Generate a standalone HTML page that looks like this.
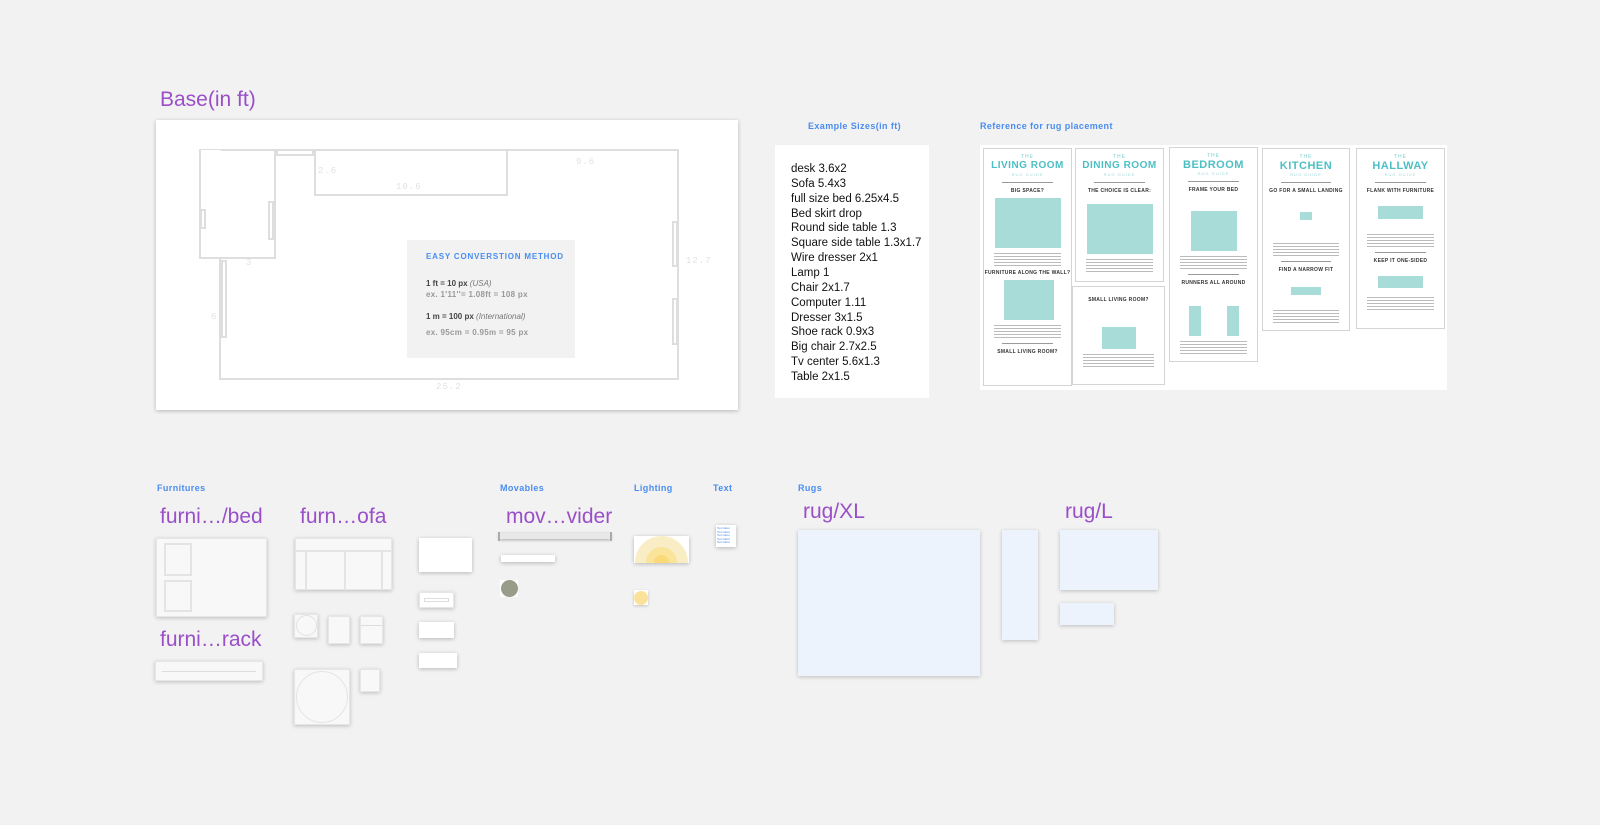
<!DOCTYPE html>
<html><head><meta charset="utf-8"><style>
*{margin:0;padding:0;box-sizing:border-box}
body{width:1600px;height:825px;background:#f2f2f2;position:relative;overflow:hidden;font-family:"Liberation Sans",sans-serif}
.a{position:absolute}
.lbl{position:absolute;color:#4a8df0;font-size:9px;font-weight:bold;letter-spacing:.4px;line-height:10px}
.pl{position:absolute;color:#9a4fc9;font-size:21px;line-height:24px;white-space:nowrap}
.w{position:absolute;border:2px solid #dedede}
.dim{position:absolute;color:#e2e2e2;font-size:9px;font-family:"Liberation Mono",monospace;letter-spacing:1px}
.sh{position:absolute;background:#fff;box-shadow:0 1px 4px rgba(0,0,0,.25)}
.fb{position:absolute;background:#f8f8f8;box-shadow:0 1px 4px rgba(0,0,0,.22);border:1px solid #e6e6e6}
.rug{position:absolute;background:#edf3fc;box-shadow:0 1px 4px rgba(0,0,0,.22)}
.card{position:absolute;background:#fff;border:1px solid #d4d4d4;text-align:center;overflow:hidden}
.t1{color:#7fd0d0;font-size:5px;letter-spacing:1px;margin-top:5px}
.t2{color:#4dbfc4;font-size:11px;font-weight:bold;letter-spacing:.5px;line-height:12px}
.t3{color:#9ed8d8;font-size:4px;letter-spacing:1px}
.hr{height:1px;background:#999;margin:5px 18px}
.h{font-size:5px;font-weight:bold;color:#333;letter-spacing:.3px;margin-top:3px}
.teal{background:#a7dcd9;margin:4px auto}
.tx{height:14px;margin:4px 10px;background:repeating-linear-gradient(#fff 0 1px,#bbb 1px 2px,#fff 2px 3px)}
</style></head><body>

<div class="pl" style="left:160px;top:88px">Base(in ft)</div>
<div class="sh" style="left:156px;top:120px;width:582px;height:290px"></div>
<!-- floor plan -->
<div class="w" style="left:199px;top:149px;width:77px;height:110px"></div>
<div class="w" style="left:219px;top:149px;width:460px;height:231px;border-left:none"></div>
<div class="a" style="left:219px;top:257px;width:2px;height:123px;background:#dedede"></div>
<div class="a" style="left:201px;top:150px;width:20px;height:107px;background:#fff"></div>
<div class="a" style="left:221px;top:150px;width:55px;height:107px;background:transparent"></div>
<div class="w" style="left:276px;top:149px;width:38px;height:7px"></div>
<div class="w" style="left:314px;top:149px;width:194px;height:47px"></div>
<div class="w" style="left:200px;top:209px;width:6px;height:20px"></div>
<div class="w" style="left:268px;top:201px;width:6px;height:39px"></div>
<div class="w" style="left:221px;top:260px;width:6px;height:78px"></div>
<div class="w" style="left:672px;top:221px;width:6px;height:46px"></div>
<div class="w" style="left:672px;top:298px;width:6px;height:47px"></div>
<div class="dim" style="left:318px;top:166px">2.6</div>
<div class="dim" style="left:396px;top:182px">10.6</div>
<div class="dim" style="left:576px;top:157px">9.6</div>
<div class="dim" style="left:246px;top:258px">3</div>
<div class="dim" style="left:211px;top:312px">6</div>
<div class="dim" style="left:686px;top:256px">12.7</div>
<div class="dim" style="left:436px;top:382px">25.2</div>
<div class="a" style="left:407px;top:240px;width:168px;height:118px;background:#f2f2f2"></div>
<div class="a" style="left:426px;top:252px;color:#4a8df0;font-size:8px;font-weight:bold;letter-spacing:.8px">EASY CONVERSTION METHOD</div>
<div class="a" style="left:426px;top:279px;color:#444;font-size:8px;font-weight:bold">1 ft = 10 px <i style="font-weight:normal;color:#777">(USA)</i></div>
<div class="a" style="left:426px;top:290px;color:#999;font-size:8px;font-weight:bold;letter-spacing:.3px">ex. 1'11''= 1.08ft = 108 px</div>
<div class="a" style="left:426px;top:312px;color:#444;font-size:8px;font-weight:bold">1 m = 100 px <i style="font-weight:normal;color:#777">(International)</i></div>
<div class="a" style="left:426px;top:328px;color:#999;font-size:8px;font-weight:bold;letter-spacing:.3px">ex. 95cm = 0.95m = 95 px</div>

<!-- example sizes -->
<div class="lbl" style="left:808px;top:121px">Example Sizes(in ft)</div>
<div class="a" style="left:775px;top:145px;width:154px;height:253px;background:#fff"></div>
<div class="a" style="left:791px;top:162px;font-size:11.5px;line-height:14.86px;color:#111">desk 3.6x2<br>Sofa 5.4x3<br>full size bed 6.25x4.5<br>Bed skirt drop<br>Round side table 1.3<br>Square side table 1.3x1.7<br>Wire dresser 2x1<br>Lamp 1<br>Chair 2x1.7<br>Computer 1.11<br>Dresser 3x1.5<br>Shoe rack 0.9x3<br>Big chair 2.7x2.5<br>Tv center 5.6x1.3<br>Table 2x1.5</div>

<!-- rug guide -->
<div class="lbl" style="left:980px;top:121px">Reference for rug placement</div>
<div class="a" style="left:980px;top:145px;width:467px;height:245px;background:#fff"></div>
<div class="card" style="left:983px;top:148px;width:89px;height:238px">
<div class="t1">THE</div><div class="t2" style="font-size:10px">LIVING ROOM</div><div class="t3">RUG GUIDE</div><div class="hr"></div>
<div class="h">BIG SPACE?</div><div class="teal" style="width:66px;height:50px"></div><div class="tx"></div>
<div class="h">FURNITURE ALONG THE WALL?</div><div class="teal" style="width:50px;height:40px;margin-left:20px"></div><div class="tx"></div><div class="hr"></div><div class="h">SMALL LIVING ROOM?</div></div>
<div class="card" style="left:1075px;top:148px;width:89px;height:134px">
<div class="t1">THE</div><div class="t2" style="font-size:10px">DINING ROOM</div><div class="t3">RUG GUIDE</div><div class="hr"></div>
<div class="h">THE CHOICE IS CLEAR:</div><div class="teal" style="width:66px;height:50px;margin-top:10px"></div><div class="tx"></div></div>
<div class="card" style="left:1072px;top:286px;width:93px;height:99px">
<div class="h" style="margin-top:10px">SMALL LIVING ROOM?</div><div class="teal" style="width:34px;height:22px;margin-top:24px"></div><div class="tx"></div></div>
<div class="card" style="left:1169px;top:147px;width:89px;height:215px">
<div class="t1">THE</div><div class="t2">BEDROOM</div><div class="t3">RUG GUIDE</div><div class="hr"></div>
<div class="h">FRAME YOUR BED</div><div class="teal" style="width:46px;height:40px;margin-top:18px"></div><div class="tx"></div><div class="hr"></div>
<div class="h">RUNNERS ALL AROUND</div><div class="teal" style="width:50px;height:30px;margin-top:20px;background:linear-gradient(90deg,#a7dcd9 0 12px,transparent 12px 38px,#a7dcd9 38px)"></div><div class="tx"></div></div>
<div class="card" style="left:1262px;top:148px;width:88px;height:183px">
<div class="t1">THE</div><div class="t2">KITCHEN</div><div class="t3">RUG GUIDE</div><div class="hr"></div>
<div class="h">GO FOR A SMALL LANDING</div><div class="teal" style="width:12px;height:8px;margin-top:18px"></div><div class="tx" style="margin-top:22px"></div><div class="hr"></div>
<div class="h">FIND A NARROW FIT</div><div class="teal" style="width:30px;height:8px;margin-top:14px"></div><div class="tx" style="margin-top:14px"></div></div>
<div class="card" style="left:1356px;top:148px;width:89px;height:181px">
<div class="t1">THE</div><div class="t2">HALLWAY</div><div class="t3">RUG GUIDE</div><div class="hr"></div>
<div class="h">FLANK WITH FURNITURE</div><div class="teal" style="width:45px;height:13px;margin-top:12px"></div><div class="tx" style="margin-top:14px"></div><div class="hr"></div>
<div class="h">KEEP IT ONE-SIDED</div><div class="teal" style="width:45px;height:12px;margin-top:12px"></div><div class="tx" style="margin-top:8px"></div></div>

<!-- bottom sections -->
<div class="lbl" style="left:157px;top:483px">Furnitures</div>
<div class="lbl" style="left:500px;top:483px">Movables</div>
<div class="lbl" style="left:634px;top:483px">Lighting</div>
<div class="lbl" style="left:713px;top:483px">Text</div>
<div class="lbl" style="left:798px;top:483px">Rugs</div>

<div class="pl" style="left:160px;top:505px">furni…/bed</div>
<div class="pl" style="left:300px;top:505px">furn…ofa</div>
<div class="pl" style="left:160px;top:628px">furni…rack</div>
<div class="pl" style="left:506px;top:505px">mov…vider</div>
<div class="pl" style="left:803px;top:500px">rug/XL</div>
<div class="pl" style="left:1065px;top:500px">rug/L</div>

<div class="fb" style="left:156px;top:538px;width:111px;height:79px"></div>
<div class="a" style="left:164px;top:543px;width:28px;height:33px;border:2px solid #e4e4e4"></div>
<div class="a" style="left:164px;top:580px;width:28px;height:32px;border:2px solid #e4e4e4"></div>
<div class="fb" style="left:155px;top:661px;width:108px;height:20px"></div>
<div class="a" style="left:162px;top:671px;width:94px;height:1px;background:#ddd"></div>

<div class="fb" style="left:295px;top:538px;width:97px;height:52px"></div>
<div class="a" style="left:296px;top:550px;width:95px;height:2px;background:#e4e4e4"></div>
<div class="a" style="left:305px;top:552px;width:2px;height:37px;background:#e4e4e4"></div>
<div class="a" style="left:344px;top:552px;width:2px;height:37px;background:#e4e4e4"></div>
<div class="a" style="left:381px;top:552px;width:2px;height:37px;background:#e4e4e4"></div>
<div class="fb" style="left:294px;top:614px;width:24px;height:24px"></div>
<div class="a" style="left:296px;top:615px;width:21px;height:21px;border-radius:50%;border:1px solid #e2e2e2"></div>
<div class="fb" style="left:328px;top:616px;width:22px;height:28px"></div>
<div class="fb" style="left:360px;top:616px;width:23px;height:28px"></div>
<div class="a" style="left:361px;top:625px;width:21px;height:1px;background:#ddd"></div>
<div class="fb" style="left:294px;top:669px;width:56px;height:56px"></div>
<div class="a" style="left:296px;top:671px;width:52px;height:52px;border-radius:50%;border:1px solid #e4e4e4"></div>
<div class="fb" style="left:360px;top:669px;width:20px;height:23px"></div>

<div class="sh" style="left:419px;top:538px;width:53px;height:34px"></div>
<div class="fb" style="left:419px;top:592px;width:35px;height:16px;background:#fff"></div>
<div class="a" style="left:424px;top:598px;width:25px;height:4px;border:1px solid #ddd"></div>
<div class="sh" style="left:419px;top:622px;width:35px;height:16px"></div>
<div class="sh" style="left:419px;top:653px;width:38px;height:15px"></div>

<div class="a" style="left:499px;top:533px;width:112px;height:6px;background:#e8e8e8;box-shadow:0 1px 3px rgba(0,0,0,.3)"></div>
<div class="a" style="left:498px;top:532px;width:2px;height:9px;background:#aaa"></div>
<div class="a" style="left:610px;top:532px;width:2px;height:9px;background:#aaa"></div>
<div class="sh" style="left:501px;top:555px;width:54px;height:7px"></div>
<div class="a" style="left:500px;top:580px;width:18px;height:17px;background:#fff"></div>
<div class="a" style="left:501px;top:580px;width:17px;height:17px;border-radius:50%;background:#979d88"></div>

<div class="sh" style="left:634px;top:536px;width:55px;height:27px;overflow:hidden">
<div class="a" style="left:1px;top:0;width:53px;height:53px;border-radius:50%;background:#f9edc6"></div>
<div class="a" style="left:12px;top:11px;width:31px;height:31px;border-radius:50%;background:#fae49a"></div>
<div class="a" style="left:20px;top:19px;width:15px;height:15px;border-radius:50%;background:#f9d978"></div></div>
<div class="a" style="left:634px;top:590px;width:14px;height:15px;background:#fff;box-shadow:0 1px 3px rgba(0,0,0,.2)"></div>
<div class="a" style="left:634px;top:591px;width:14px;height:14px;border-radius:50%;background:#fbe29a"></div>

<div class="sh" style="left:716px;top:525px;width:20px;height:22px;color:#4a8df0;font-size:3px;line-height:3.5px;padding:2px 1px;overflow:hidden">Text label Text label Text label Text label Text label</div>

<div class="rug" style="left:798px;top:530px;width:182px;height:146px"></div>
<div class="rug" style="left:1002px;top:530px;width:36px;height:110px"></div>
<div class="rug" style="left:1060px;top:530px;width:98px;height:60px"></div>
<div class="rug" style="left:1060px;top:603px;width:54px;height:22px"></div>
</body></html>
